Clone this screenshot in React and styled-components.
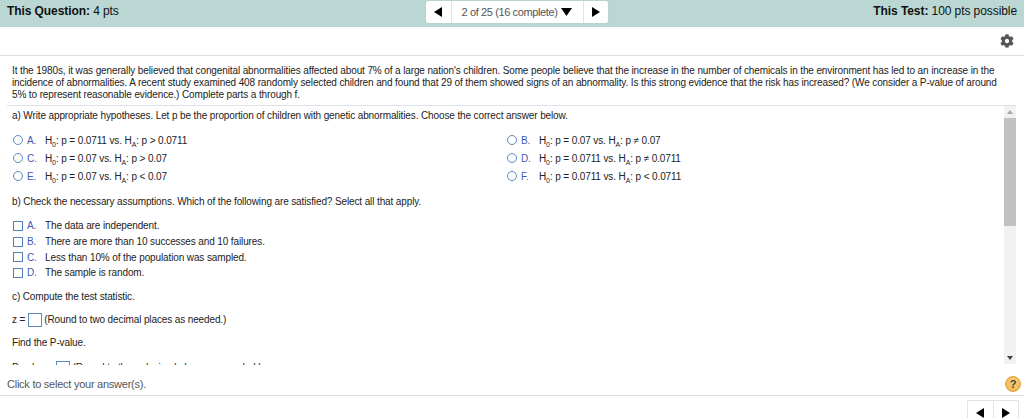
import styled, { createGlobalStyle } from 'styled-components';
import { FaCog } from 'react-icons/fa';

const GlobalStyle = createGlobalStyle`
  html, body {
    margin: 0;
    padding: 0;
    background: #fff;
  }
  body {
    font-family: "Liberation Sans", Arial, sans-serif;
    color: #222;
  }
`

const Triangle = ({ dir }) => {
  const points = {
    left: '8,0 8,10 0,5',
    right: '0,0 0,10 8,5',
    down: '0,0 11,0 5.5,8',
  }
  const wide = dir === 'down'
  return (
    <svg width={wide ? 11 : 8} height={wide ? 8 : 10} viewBox={wide ? '0 0 11 8' : '0 0 8 10'}>
      <polygon points={points[dir]} fill="#000" />
    </svg>
  )
}

const Sub = ({ children }) => <SubText>{children}</SubText>

const Hypothesis = ({ letter, p0, sign, pa }) => (
  <Choice>
    <Radio />
    <Letter>{letter}.</Letter>
    <span>
      H<Sub>0</Sub>: p = {p0} vs. H<Sub>A</Sub>: p {sign} {pa}
    </span>
  </Choice>
)

const Assumption = ({ letter, children }) => (
  <CheckRow>
    <CheckBox />
    <CheckLetter>{letter}.</CheckLetter>
    <span>{children}</span>
  </CheckRow>
)

export default function App() {
  return (
    <Page>
      <GlobalStyle />
      <Header>
        <HeaderText><b>This Question:</b> 4 pts</HeaderText>
        <Pager>
          <PagerButton><Triangle dir="left" /></PagerButton>
          <PagerLabel><span>2 of 25 (16 complete)</span><Triangle dir="down" /></PagerLabel>
          <PagerButton><Triangle dir="right" /></PagerButton>
        </Pager>
        <TestText><b>This Test:</b> 100 pts possible</TestText>
      </Header>

      <ToolRow>
        <FaCog size={14} color="#555" />
      </ToolRow>

      <Prompt>
        It the 1980s, it was generally believed that congenital abnormalities affected about 7% of a large nation's children. Some people believe that the increase in the number of chemicals in the environment has led to an increase in the<br />
        incidence of abnormalities. A recent study examined 408 randomly selected children and found that 29 of them showed signs of an abnormality. Is this strong evidence that the risk has increased? (We consider a P-value of around<br />
        5% to represent reasonable evidence.) Complete parts a through f.
      </Prompt>

      <Divider />

      <ScrollPane>
        <Content>
          <Paragraph>a) Write appropriate hypotheses. Let p be the proportion of children with genetic abnormalities. Choose the correct answer below.</Paragraph>
          <ChoiceGrid>
            <Hypothesis letter="A" p0="0.0711" sign=">" pa="0.0711" />
            <Hypothesis letter="B" p0="0.07" sign="≠" pa="0.07" />
            <Hypothesis letter="C" p0="0.07" sign=">" pa="0.07" />
            <Hypothesis letter="D" p0="0.0711" sign="≠" pa="0.0711" />
            <Hypothesis letter="E" p0="0.07" sign="<" pa="0.07" />
            <Hypothesis letter="F" p0="0.0711" sign="<" pa="0.0711" />
          </ChoiceGrid>

          <Paragraph $top={11}>b) Check the necessary assumptions. Which of the following are satisfied? Select all that apply.</Paragraph>
          <CheckList>
            <Assumption letter="A">The data are independent.</Assumption>
            <Assumption letter="B">There are more than 10 successes and 10 failures.</Assumption>
            <Assumption letter="C">Less than 10% of the population was sampled.</Assumption>
            <Assumption letter="D">The sample is random.</Assumption>
          </CheckList>

          <Paragraph $top={10}>c) Compute the test statistic.</Paragraph>
          <AnswerRow $top={10}>
            <span>z =</span>
            <AnswerBox />
            <span>(Round to two decimal places as needed.)</span>
          </AnswerRow>
          <Paragraph $top={10}>Find the P-value.</Paragraph>
          <AnswerRow $top={12}>
            <span>P-value =</span>
            <AnswerBox />
            <span>(Round to three decimal places as needed.)</span>
          </AnswerRow>
        </Content>
        <ScrollBar>
          <ScrollArrow>
            <svg width="6" height="4" viewBox="0 0 6 4"><polygon points="0,4 6,4 3,0" fill="#a8a8a8" /></svg>
          </ScrollArrow>
          <ScrollThumb />
          <ScrollTrack />
          <ScrollArrow>
            <svg width="6" height="4" viewBox="0 0 6 4"><polygon points="0,0 6,0 3,4" fill="#444" /></svg>
          </ScrollArrow>
        </ScrollBar>
      </ScrollPane>

      <StatusRow>
        <StatusText>Click to select your answer(s).</StatusText>
        <HelpBadge>?</HelpBadge>
      </StatusRow>

      <FooterNav>
        <PagerGroup>
          <FooterButton><Triangle dir="left" /></FooterButton>
          <FooterButton><Triangle dir="right" /></FooterButton>
        </PagerGroup>
      </FooterNav>
    </Page>
  )
}

const Page = styled.div`
  width: 1024px;
  height: 418px;
  overflow: hidden;
  display: flex;
  flex-direction: column;
  font-size: 10px;
  letter-spacing: -0.12px;
`

const Header = styled.header`
  height: 27px;
  flex: none;
  background: #bad7d3;
  display: grid;
  grid-template-columns: 426px 182px 1fr;
  align-items: flex-start;
`

const HeaderText = styled.div`
  font-size: 12px;
  line-height: 13px;
  letter-spacing: -0.08px;
  padding: 5px 0 0 7px;
  color: #111;
`

const TestText = styled(HeaderText)`
  justify-self: end;
  padding: 5px 7px 0 0;
`

const Pager = styled.div`
  display: flex;
  height: 22px;
  margin-top: 1px;
  background: #fff;
  border-radius: 2px;
  box-shadow: 0 0 1px #9fb8b5;
`

const PagerButton = styled.div`
  flex: 1;
  display: flex;
  align-items: center;
  justify-content: center;
`

const PagerLabel = styled.div`
  width: 131px;
  flex: none;
  border-left: 1px solid #e3e3e3;
  border-right: 1px solid #e3e3e3;
  display: flex;
  align-items: center;
  justify-content: center;
  gap: 4px;
  font-size: 11px;
  letter-spacing: -0.38px;
  color: #555;
`

const ToolRow = styled.div`
  height: 28px;
  flex: none;
  display: flex;
  align-items: center;
  justify-content: flex-end;
  padding-right: 10px;
  border-bottom: 1px solid #ddd;
`

const Prompt = styled.div`
  height: 49px;
  flex: none;
  box-sizing: border-box;
  padding: 9px 0 0 12px;
  line-height: 12px;
  white-space: nowrap;
`

const Divider = styled.div`
  height: 1px;
  flex: none;
  margin: 0 8px 0 7px;
  background: #dde1e8;
`

const ScrollPane = styled.div`
  height: 259px;
  flex: none;
  display: flex;
  overflow: hidden;
`

const Content = styled.div`
  flex: 1;
  overflow: hidden;
  padding: 4px 0 0 12px;
`

const Paragraph = styled.div`
  margin-top: ${(p) => p.$top || 0}px;
  line-height: 12px;
`

const ChoiceGrid = styled.div`
  margin-top: 9px;
  display: grid;
  grid-template-columns: 494px 1fr;
  grid-auto-rows: 18px;
`

const Choice = styled.div`
  display: flex;
  align-items: center;
  padding-left: 1px;
`

const Radio = styled.span`
  width: 8px;
  height: 8px;
  border: 1px solid #5a8ac0;
  border-radius: 50%;
  margin-right: 4px;
`

const Letter = styled.span`
  width: 18px;
  color: #3f58b5;
`

const SubText = styled.sub`
  font-size: 7px;
  line-height: 0;
`

const CheckList = styled.div`
  margin-top: 10px;
  display: flex;
  flex-direction: column;
`

const CheckRow = styled.div`
  height: 15.7px;
  display: flex;
  align-items: center;
  padding-left: 1px;
`

const CheckBox = styled.span`
  width: 8px;
  height: 8px;
  border: 1px solid #4f7fb8;
  margin-right: 4px;
`

const CheckLetter = styled.span`
  width: 18px;
  color: #3f58b5;
`

const AnswerRow = styled.div`
  margin-top: ${(p) => p.$top}px;
  height: 14px;
  display: flex;
  align-items: center;
  white-space: nowrap;
`

const AnswerBox = styled.span`
  width: 12px;
  height: 12px;
  border: 1px solid #5a8ac0;
  margin: 0 2px 0 3px;
`

const ScrollBar = styled.div`
  width: 12px;
  height: 258px;
  flex: none;
  margin-right: 8px;
  display: flex;
  flex-direction: column;
  background: #f1f1f1;
`

const ScrollArrow = styled.div`
  height: 12px;
  flex: none;
  display: flex;
  align-items: center;
  justify-content: center;
`

const ScrollThumb = styled.div`
  height: 108px;
  flex: none;
  background: #c1c1c1;
`

const ScrollTrack = styled.div`
  flex: 1;
`

const StatusRow = styled.div`
  height: 31px;
  flex: none;
  display: flex;
  align-items: center;
  justify-content: space-between;
  padding: 8px 3px 0 7px;
  box-sizing: border-box;
  border-bottom: 1px solid #ddd;
`

const StatusText = styled.span`
  font-size: 11px;
  letter-spacing: -0.25px;
  color: #555;
`

const HelpBadge = styled.span`
  width: 16px;
  height: 16px;
  border-radius: 50%;
  background: radial-gradient(circle at 50% 40%, #fbd27a, #eeb040);
  border: 1px solid #d9a440;
  color: #444;
  font-weight: bold;
  font-size: 11px;
  display: flex;
  align-items: center;
  justify-content: center;
  box-sizing: border-box;
`

const FooterNav = styled.div`
  flex: 1;
  display: flex;
  justify-content: flex-end;
  padding: 4px 5px 0 0;
`

const PagerGroup = styled.div`
  display: flex;
  height: 24px;
  border: 1px solid #e3e3e3;
  border-bottom: none;
  border-radius: 2px 2px 0 0;
`

const FooterButton = styled.div`
  width: 24.5px;
  display: flex;
  align-items: center;
  justify-content: center;
  & + & {
    border-left: 1px solid #e3e3e3;
  }
`
